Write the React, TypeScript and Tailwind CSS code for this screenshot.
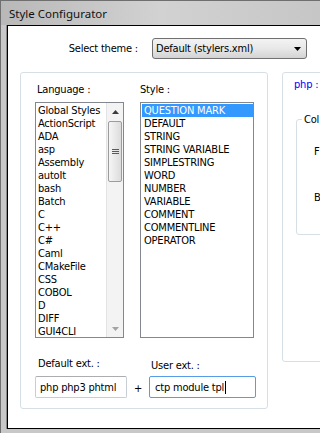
const LANGS = [
  "Global Styles",
  "ActionScript",
  "ADA",
  "asp",
  "Assembly",
  "autoIt",
  "bash",
  "Batch",
  "C",
  "C++",
  "C#",
  "Caml",
  "CMakeFile",
  "CSS",
  "COBOL",
  "D",
  "DIFF",
  "GUI4CLI",
];

const STYLES = [
  "QUESTION MARK",
  "DEFAULT",
  "STRING",
  "STRING VARIABLE",
  "SIMPLESTRING",
  "WORD",
  "NUMBER",
  "VARIABLE",
  "COMMENT",
  "COMMENTLINE",
  "OPERATOR",
];

function ScrollBar() {
  return (
    <div className="flex w-[17px] shrink-0 flex-col border-l border-[#e3e3e3] bg-[#f3f3f3]">
      <div className="flex h-[17px] items-center justify-center">
        <svg width="7" height="4" viewBox="0 0 7 4">
          <polygon points="3.5,0 7,4 0,4" fill="#3c3c3c" />
        </svg>
      </div>
      <div className="mx-[1px] mt-[1px] flex h-[61px] items-center justify-center rounded-[2px] border border-[#9c9c9c] bg-gradient-to-r from-[#f6f6f6] to-[#dcdcdc]">
        <svg width="7" height="5" viewBox="0 0 7 5">
          <rect x="0" y="0" width="7" height="1" fill="#5a5a5a" />
          <rect x="0" y="2" width="7" height="1" fill="#5a5a5a" />
          <rect x="0" y="4" width="7" height="1" fill="#5a5a5a" />
        </svg>
      </div>
      <div className="flex-1" />
      <div className="flex h-[17px] items-center justify-center">
        <svg width="7" height="4" viewBox="0 0 7 4">
          <polygon points="0,0 7,0 3.5,4" fill="#a3a3a3" />
        </svg>
      </div>
    </div>
  );
}

export default function App() {
  return (
    <div className="h-[433px] w-[320px] overflow-hidden border-t border-l border-[#6f6f6f] bg-[#c8c8c8] font-['DejaVu_Sans_Condensed','DejaVu_Sans',sans-serif] text-[11px] leading-[13px] tracking-[-0.2px] text-black">
      {/* title bar */}
      <div className="flex h-[24px] items-center bg-gradient-to-r from-[#b8b8b8] via-[#d2d2d2] to-[#c6c6c6] pl-[8px] pt-[1px] font-['Noto_Sans',sans-serif] text-[11.5px] tracking-normal text-[#111]">
        Style Configurator
      </div>

      {/* client area */}
      <div className="ml-[6px] h-[404px] w-[360px] border-t border-b border-l border-black bg-white shadow-[-1px_0_0_#8a8a8a]">
        {/* theme row */}
        <div className="mt-[12px] flex items-center">
          <div className="w-[130px] text-right">Select theme :</div>
          <div className="ml-[14px] flex h-[21px] w-[155px] items-center justify-between rounded-[3px] border border-[#707070] bg-gradient-to-b from-[#f3f3f3] via-[#e8e8e8] to-[#d3d3d3] pl-[3px] pr-[5px]">
            <span>Default (stylers.xml)</span>
            <svg width="7" height="4" viewBox="0 0 7 4">
              <polygon points="0,0 7,0 3.5,4" fill="#000" />
            </svg>
          </div>
        </div>

        {/* groups */}
        <div className="mt-[13px] flex">
          {/* left group */}
          <div className="ml-[12px] h-[337px] w-[248px] shrink-0 rounded-[3px] border border-[#d5dfe5]">
            <div className="flex pt-[10px]">
              <div className="ml-[14px] w-[89px]">
                <div className="pl-[2px]">Language :</div>
                <div className="mt-[6px] flex h-[236px] border border-[#828790]">
                  <div className="flex-1 overflow-hidden pt-[1px]">
                    {LANGS.map((l) => (
                      <div key={l} className="h-[13px] whitespace-nowrap pl-[2px]">
                        {l}
                      </div>
                    ))}
                  </div>
                  <ScrollBar />
                </div>
              </div>
              <div className="ml-[16px] w-[114px]">
                <div>Style :</div>
                <div className="mt-[6px] h-[236px] overflow-hidden border border-[#828790] pl-[1px] pt-[1px]">
                  {STYLES.map((s, i) => (
                    <div
                      key={s}
                      className={
                        i === 0
                          ? "h-[13px] whitespace-nowrap bg-[#3399ff] pl-[2px] text-white"
                          : "h-[13px] whitespace-nowrap pl-[2px]"
                      }
                    >
                      {s}
                    </div>
                  ))}
                </div>
              </div>
            </div>

            <div className="mt-[19px] ml-[14px] flex items-end">
              <div className="w-[92px]">
                <div className="pl-[3px]">Default ext. :</div>
                <div className="mt-[6px] flex h-[22px] items-center rounded-[2px] border border-[#c9ced6] border-t-[#abadb3] pl-[4px]">
                  php php3 phtml
                </div>
              </div>
              <div className="flex h-[22px] w-[22px] items-center justify-center pt-[2px]">+</div>
              <div className="w-[107px]">
                <div className="pl-[2px] pt-[2px]">User ext. :</div>
                <div className="mt-[4px] flex h-[22px] items-center rounded-[2px] border border-[#569de5] pl-[5px]">
                  ctp module tpl
                  <span className="ml-[1px] inline-block h-[13px] w-[1px] bg-black" />
                </div>
              </div>
            </div>
          </div>

          {/* right group, cut off by the window edge */}
          <div className="ml-[14px] h-[290px] w-[140px] shrink-0 rounded-[3px] border border-[#d5dfe5]">
            <div className="pl-[11px] pt-[5px] text-[#0000ff]">php :</div>
            <div className="relative ml-[13px] mt-[28px] h-[116px] w-[120px] rounded-[3px] border border-[#d5dfe5]">
              <span className="absolute -top-[7px] left-[5px] whitespace-nowrap bg-white px-[2px]">
                Col
              </span>
              <div className="whitespace-nowrap pl-[17px] pt-[25px]">F</div>
              <div className="whitespace-nowrap pl-[17px] pt-[33px]">B</div>
            </div>
          </div>
        </div>
      </div>
    </div>
  );
}
